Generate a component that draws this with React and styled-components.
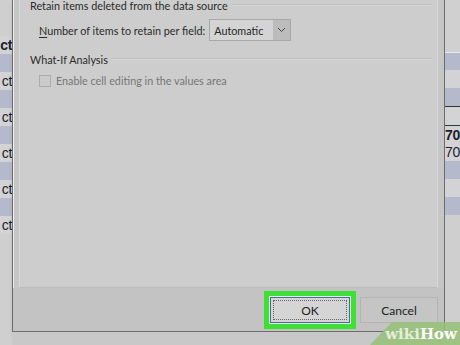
import React from "react";
import styled, { createGlobalStyle } from "styled-components";

const Global = createGlobalStyle`
  html, body { margin: 0; padding: 0; }
  body {
    width: 460px;
    height: 345px;
    overflow: hidden;
    background: #c8c8c8;
    font-family: Lato, "Noto Sans", sans-serif;
  }
`;

const Wrap = styled.div`
  position: relative;
  width: 460px;
  height: 345px;
`;

const Page = styled.div`
  display: flex;
  width: 460px;
  height: 345px;
  overflow: hidden;
  background: #c8c8c8;
`;

/* spreadsheet strips left and right of the dialog */
const Sheet = styled.div`
  width: ${(p) => p.$w}px;
  flex: none;
  display: flex;
  flex-direction: column;
  overflow: hidden;
  background: #cfcfcf;
`;

const SheetRow = styled.div`
  height: ${(p) => p.$h || 18}px;
  flex: none;
  display: flex;
  align-items: center;
  justify-content: ${(p) => (p.$left ? "flex-start" : "flex-end")};
  overflow: hidden;
  white-space: nowrap;
  background: ${(p) => (p.$blue ? "#b5b9cc" : p.$bg || "#d3d3d6")};
  border-top: ${(p) => (p.$line ? `1px solid ${p.$line}` : "none")};
  box-sizing: border-box;
  font-family: "Liberation Sans", Arial, sans-serif;
  font-size: 14px;
  font-weight: ${(p) => (p.$bold ? 700 : 400)};
  color: #1d1d2b;
  letter-spacing: -0.3px;
`;

const DialogCol = styled.div`
  width: 433px;
  flex: none;
  display: flex;
  flex-direction: column;
`;

const Dialog = styled.div`
  height: 332px;
  box-sizing: border-box;
  border-left: 1px solid #6c6c6c;
  border-right: 1px solid #6c6c6c;
  border-bottom: 1px solid #6c6c6c;
  background: #c6c6c6;
  display: flex;
  flex-direction: column;
  padding-left: 6px;
  box-shadow: inset 1px 0 0 #eeeeee, 0 3px 4px rgba(0, 0, 0, 0.08);
`;

const Panel = styled.div`
  height: 288px;
  box-sizing: border-box;
  margin-right: 6px;
  border-left: 1px solid #d8d8d8;
  border-right: 1px solid #d6d6d6;
  border-bottom: 1px solid #bcbcbc;
  background: #cdcdcd;
  padding: 0 6px 0 10px;
  display: flex;
  flex-direction: column;
`;

const Heading = styled.div`
  height: 16px;
  flex: none;
  margin-top: ${(p) => p.$top}px;
  display: flex;
  align-items: center;
  font-size: 10.8px;
  color: #2b2b2b;
  white-space: nowrap;
  &::after {
    content: "";
    flex: 1;
    margin-left: 4px;
    border-top: 1px solid #bfbfbf;
    border-bottom: 1px solid #d6d6d6;
  }
`;

const OptionRow = styled.div`
  flex: none;
  display: flex;
  align-items: center;
  gap: 4px;
  margin-top: ${(p) => p.$top}px;
  padding-left: 9px;
  font-size: 10.8px;
  color: ${(p) => (p.$disabled ? "#767676" : "#2b2b2b")};
  white-space: nowrap;
  u { text-decoration: underline; text-underline-offset: 2px; }
`;

const Select = styled.div`
  width: 82px;
  height: 22px;
  box-sizing: border-box;
  border: 1px solid #a9a9a9;
  background: #d4d4d4;
  display: flex;
  align-items: center;
  padding-left: 4px;
  color: #262626;
`;

const SelectValue = styled.span`
  flex: 1;
`;

const SelectButton = styled.div`
  width: 17px;
  height: 20px;
  background: #bcbcbc;
  display: flex;
  align-items: center;
  justify-content: center;
`;

const Checkbox = styled.span`
  width: 12px;
  height: 12px;
  box-sizing: border-box;
  border: 1px solid #acacac;
  background: #cbcbcb;
  margin-right: 1px;
`;

const Footer = styled.div`
  flex: 1;
  display: flex;
  justify-content: flex-end;
  align-items: flex-start;
  gap: 10px;
  padding: 9px 6px 0 0;
  background: #c3c3c3;
  margin-left: -6px;
`;

const Button = styled.button`
  width: ${(p) => p.$w}px;
  height: 26px;
  box-sizing: border-box;
  font-family: Lato, "Noto Sans", sans-serif;
  font-size: 12px;
  color: #222;
  background: ${(p) => (p.$primary ? "#d5d5d5" : "#c5c5c5")};
  border: 1px solid ${(p) => (p.$primary ? "#3f6f9e" : "#b4b4b4")};
  outline: ${(p) => (p.$primary ? "1px dotted #666" : "none")};
  outline-offset: -4px;
  box-shadow: ${(p) => (p.$primary ? "0 0 0 1px #e6e6e6, 0 0 0 6px #3ee035" : "none")};
  padding: 0;
`;

const Below = styled.div`
  flex: 1;
  background: #c8c8c8;
`;

const Watermark = styled.div`
  position: absolute;
  right: 0;
  bottom: 0;
  width: 90px;
  height: 23px;
  background: rgba(150, 192, 120, 0.85);
  clip-path: polygon(22px 0, 100% 0, 100% 100%, 0 100%);
  display: flex;
  align-items: center;
  justify-content: flex-end;
  padding-right: 3px;
  box-sizing: border-box;
  font-family: "DejaVu Serif", "Liberation Serif", serif;
  font-weight: 700;
  font-size: 15px;
  color: #ffffff;
  span { color: #e4eed9; }
`;

const Chevron = () => (
  <svg width="9" height="6" viewBox="0 0 9 6">
    <path d="M1 1 L4.5 4.5 L8 1" fill="none" stroke="#444" strokeWidth="1" />
  </svg>
);

const leftRows = [
  { h: 36, bg: "#cfcfcf" },
  { text: "ct", bold: true },
  { blue: true },
  { text: "ct" },
  { blue: true },
  { text: "ct" },
  { blue: true },
  { text: "ct" },
  { blue: true },
  { text: "ct" },
  { blue: true },
  { text: "ct" },
];

const rightRows = [
  { h: 52, bg: "#d0d0d0" },
  { blue: true, line: "#e8e8ee" },
  {},
  { blue: true },
  { h: 19, line: "#2f3b30" },
  { text: "70", bold: true, line: "#2f3b30" },
  { text: "70", h: 18 },
  { blue: true },
  {},
  { blue: true },
];

export default function App() {
  return (
    <Wrap>
      <Global />
      <Page>
        <Sheet $w={12}>
          {leftRows.map((r, i) => (
            <SheetRow key={i} $h={r.h} $bg={r.bg} $blue={r.blue} $bold={r.bold}>
              {r.text}
            </SheetRow>
          ))}
        </Sheet>
        <DialogCol>
          <Dialog>
            <Panel>
              <Heading $top={-3}>Retain items deleted from the data source</Heading>
              <OptionRow $top={6}>
                <span>
                  <u>N</u>umber of items to retain per field:
                </span>
                <Select>
                  <SelectValue>Automatic</SelectValue>
                  <SelectButton>
                    <Chevron />
                  </SelectButton>
                </Select>
              </OptionRow>
              <Heading $top={10}>What-If Analysis</Heading>
              <OptionRow $top={7} $disabled>
                <Checkbox />
                <span>Enable cell editing in the values area</span>
              </OptionRow>
            </Panel>
            <Footer>
              <Button $primary $w={80}>OK</Button>
              <Button $w={78}>Cancel</Button>
            </Footer>
          </Dialog>
          <Below />
        </DialogCol>
        <Sheet $w={15}>
          {rightRows.map((r, i) => (
            <SheetRow key={i} $left $h={r.h} $bg={r.bg} $blue={r.blue} $bold={r.bold} $line={r.line}>
              {r.text}
            </SheetRow>
          ))}
        </Sheet>
      </Page>
      <Watermark>
        <span>wiki</span>How
      </Watermark>
    </Wrap>
  );
}
